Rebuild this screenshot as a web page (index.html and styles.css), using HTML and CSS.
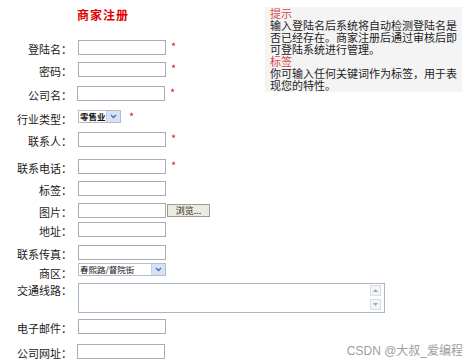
FILE: index.html
```html
<!DOCTYPE html>
<html lang="zh-CN">
<head>
<meta charset="utf-8">
<title>商家注册</title>
<link rel="stylesheet" href="styles.css">
</head>
<body>
<div class="page">
  <form class="reg">
    <aside class="tips">
      <div class="tip-title">提示</div>
      <div class="tip-text">输入登陆名后系统将自动检测登陆名是否已经存在。商家注册后通过审核后即可登陆系统进行管理。</div>
      <div class="tip-title">标签</div>
      <div class="tip-text">你可输入任何关键词作为标签，用于表现您的特性。</div>
    </aside>

    <div class="field title-cell"><h1 class="title">商家注册</h1></div>

    <label class="lbl">登陆名：</label>
    <div class="field"><input class="txt" type="text"><span class="req">*</span></div>

    <label class="lbl">密码：</label>
    <div class="field"><input class="txt" type="password"><span class="req">*</span></div>

    <label class="lbl">公司名：</label>
    <div class="field"><input class="txt shift" type="text"><span class="req">*</span></div>

    <label class="lbl">行业类型：</label>
    <div class="field">
      <div class="select sel-short"><span class="sel-text bold">零售业</span><span class="sel-btn"><svg width="7" height="5" viewBox="0 0 7 5"><path d="M1 1 L3.5 3.5 L6 1" fill="none" stroke="#4a6fb0" stroke-width="1.4"/></svg></span></div>
      <span class="req req-sel">*</span>
    </div>

    <label class="lbl">联系人：</label>
    <div class="field"><input class="txt" type="text"><span class="req">*</span></div>

    <label class="lbl">联系电话：</label>
    <div class="field"><input class="txt" type="text"><span class="req">*</span></div>

    <label class="lbl">标签：</label>
    <div class="field"><input class="txt" type="text"></div>

    <label class="lbl">图片：</label>
    <div class="field"><input class="txt" type="text"><button class="browse" type="button">浏览...</button></div>

    <label class="lbl">地址：</label>
    <div class="field"><input class="txt" type="text"></div>

    <label class="lbl">联系传真：</label>
    <div class="field"><input class="txt" type="text"></div>

    <label class="lbl">商区：</label>
    <div class="field">
      <div class="select sel-long"><span class="sel-text">春熙路/督院街</span><span class="sel-btn"><svg width="7" height="5" viewBox="0 0 7 5"><path d="M1 1 L3.5 3.5 L6 1" fill="none" stroke="#4a6fb0" stroke-width="1.4"/></svg></span></div>
    </div>

    <label class="lbl lbl-top">交通线路：</label>
    <div class="field wide">
      <div class="area">
        <textarea class="area-input"></textarea>
        <div class="scroll">
          <span class="sbtn"><svg width="5" height="3" viewBox="0 0 5 3"><path d="M0 3 L2.5 0 L5 3Z" fill="#9aa"/></svg></span>
          <span class="sbtn"><svg width="5" height="3" viewBox="0 0 5 3"><path d="M0 0 L2.5 3 L5 0Z" fill="#9aa"/></svg></span>
        </div>
      </div>
    </div>

    <label class="lbl">电子邮件：</label>
    <div class="field"><input class="txt" type="text"></div>

    <label class="lbl">公司网址：</label>
    <div class="field"><input class="txt shift" type="text"></div>
  </form>
  <div class="watermark">CSDN @大叔_爱编程</div>
</div>
</body>
</html>
```

FILE: styles.css
```css
html, body {
  margin: 0;
  padding: 0;
  background: #ffffff;
}

body {
  font-family: "Noto Sans CJK SC", "Liberation Sans", sans-serif;
  font-size: 11px;
  color: #222222;
}

.page {
  position: relative;
  width: 474px;
  height: 364px;
  overflow: hidden;
}

.reg {
  display: grid;
  grid-template-columns: 78px 187px 1fr;
  grid-template-rows: 40px 22px 24px 24px 22px 27px 22px 22px 19px 23px 19px 19px 36px 25px 20px;
  margin: 0;
}

.tips {
  grid-column: 3;
  grid-row: 1 / span 4;
  align-self: start;
  margin-top: 7px;
  width: 187px;
  padding: 0 5px 1px 5px;
  background: #f4f4f4;
  line-height: 12px;
  font-size: 11px;
  color: #222222;
}

.tip-title {
  color: #d24a4a;
}

.title-cell {
  grid-column: 2;
}

.title {
  margin: 0 0 0 -1px;
  padding-top: 8px;
  font-size: 12px;
  line-height: 14px;
  font-weight: bold;
  color: #e00000;
  letter-spacing: 1px;
}

.lbl {
  grid-column: 1;
  text-align: right;
  padding-right: 6px;
  padding-top: 2px;
  line-height: 14px;
  white-space: nowrap;
}

.lbl-top {
  padding-top: 0;
}

.field {
  grid-column: 2;
  display: flex;
  align-items: flex-start;
}

.wide {
  grid-column: 2 / span 2;
}

.txt {
  box-sizing: border-box;
  width: 88px;
  height: 15px;
  margin: 0;
  padding: 0 2px;
  border: 1px solid #a7adb5;
  background: #ffffff;
  font: inherit;
}

.shift {
  margin-left: -1px;
}

.req {
  margin-left: 5px;
  color: #e02020;
  font-size: 11px;
  line-height: 12px;
}

.req-sel {
  margin-left: 8px;
}

.select {
  box-sizing: border-box;
  height: 13px;
  display: flex;
  align-items: stretch;
  border: 1px solid #b5bcc6;
  background: #ffffff;
}

.sel-short {
  width: 43px;
}

.sel-long {
  width: 88px;
  margin-top: -1px;
}

.sel-text {
  flex: 1;
  min-width: 0;
  padding-left: 1px;
  font-size: 8.5px;
  line-height: 11px;
  white-space: nowrap;
  color: #111111;
}

.bold {
  font-weight: bold;
}

.sel-btn {
  flex: none;
  width: 13px;
  display: flex;
  align-items: center;
  justify-content: center;
  background: #d6e3f7;
  border-left: 1px solid #c3d2ea;
}

.browse {
  box-sizing: border-box;
  width: 43px;
  height: 13px;
  margin: 1px 0 0 1px;
  padding: 0;
  border: 1px solid #9a9a90;
  background: #ecebe0;
  font-family: "Noto Sans CJK SC", sans-serif;
  font-size: 9px;
  line-height: 11px;
  color: #222222;
}

.area {
  box-sizing: border-box;
  width: 307px;
  height: 30px;
  display: flex;
  border: 1px solid #a9b6c6;
  background: #ffffff;
}

.area-input {
  flex: 1;
  margin: 0;
  padding: 0;
  border: 0;
  resize: none;
  outline: none;
  background: transparent;
}

.scroll {
  width: 13px;
  display: flex;
  flex-direction: column;
  justify-content: space-between;
  padding: 1px 1px 2px 0;
}

.sbtn {
  box-sizing: border-box;
  width: 11px;
  height: 11px;
  display: flex;
  align-items: center;
  justify-content: center;
  border: 1px solid #d8dde3;
  background: #f3f4f6;
}

.watermark {
  position: absolute;
  right: 11px;
  bottom: 6px;
  font-family: "Liberation Sans", "Noto Sans CJK SC", sans-serif;
  font-size: 12px;
  line-height: 14px;
  color: #9e9e9e;
}
```
